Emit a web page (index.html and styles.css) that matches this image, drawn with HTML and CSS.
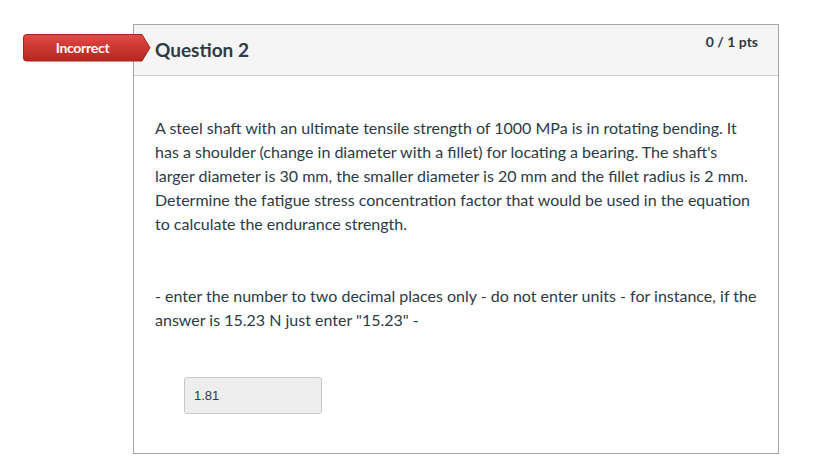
FILE: index.html
```html
<!DOCTYPE html>
<html>
<head>
<meta charset="utf-8">
<link rel="stylesheet" href="styles.css">
</head>
<body>
<div class="page">
  <div class="badge">
    <svg class="badge-shape" width="128" height="28" viewBox="0 0 128 28">
      <defs>
        <linearGradient id="rg" x1="0" y1="0" x2="0" y2="1">
          <stop offset="0" stop-color="#e34847"/>
          <stop offset="1" stop-color="#b5261f"/>
        </linearGradient>
      </defs>
      <path d="M3.5,0.5 H119 L127,13.75 L119,27 H3.5 Q0.5,27 0.5,24 V3.5 Q0.5,0.5 3.5,0.5 Z" fill="url(#rg)" stroke="#a8231d" stroke-width="1"/>
    </svg>
    <span class="badge-text">Incorrect</span>
  </div>
  <div class="card">
    <div class="card-header">
      <div class="q-name">Question 2</div>
      <div class="q-pts">0 / 1 pts</div>
    </div>
    <div class="card-body">
      <p>A steel shaft with an ultimate tensile strength of 1000 MPa is in rotating bending. It has a shoulder (change in diameter with a fillet) for locating a bearing. The shaft's larger diameter is 30 mm, the smaller diameter is 20 mm and the fillet radius is 2 mm. Determine the fatigue stress concentration factor that would be used in the equation to calculate the endurance strength.</p>
      <p>&nbsp;</p>
      <p>- enter the number to two decimal places only - do not enter units - for instance, if the answer is 15.23 N just enter "15.23" -</p>
      <div class="answer">1.81</div>
    </div>
  </div>
</div>
</body>
</html>
```
FILE: styles.css
```css
html, body {
  margin: 0;
  padding: 0;
  background: #ffffff;
}
body {
  font-family: Lato, "Open Sans", sans-serif;
  color: #2d3b45;
}
.page {
  position: relative;
  padding: 24px 0 0 133px;
  width: 832px;
  height: 471px;
  box-sizing: border-box;
}
.badge {
  position: absolute;
  z-index: 2;
  left: 23px;
  top: 34px;
  width: 128px;
  height: 28px;
}
.badge-shape {
  display: block;
}
.badge-text {
  position: absolute;
  left: 0;
  top: 0;
  width: 119px;
  height: 26px;
  display: flex;
  align-items: center;
  justify-content: center;
  color: #ffffff;
  font-weight: 700;
  font-size: 14px;
  letter-spacing: -0.3px;
}
.card {
  width: 646px;
  height: 430px;
  box-sizing: border-box;
  border: 1px solid #a7a7a7;
}
.card-header {
  height: 50px;
  background: #f5f5f5;
  border-bottom: 1px solid #c7cdd1;
  display: flex;
  justify-content: space-between;
  padding: 0 20px 0 21px;
}
.q-name {
  font-size: 19px;
  font-weight: 700;
  margin-top: 13px;
  line-height: 24px;
}
.q-pts {
  font-size: 14px;
  font-weight: 700;
  margin-top: 8px;
  line-height: 18px;
  color: #2d3b45;
}
.card-body {
  padding: 28px 20px 0 21px;
  font-size: 16px;
  line-height: 24px;
}
.card-body p {
  margin: 12px 0;
}
.answer {
  margin: 45px 0 0 29px;
  width: 138px;
  height: 37px;
  box-sizing: border-box;
  background: #ededed;
  border: 1px solid #c8c8c8;
  border-radius: 3px;
  font-family: "Liberation Sans", Arial, sans-serif;
  font-size: 13px;
  line-height: 35px;
  padding-left: 9px;
}
```
